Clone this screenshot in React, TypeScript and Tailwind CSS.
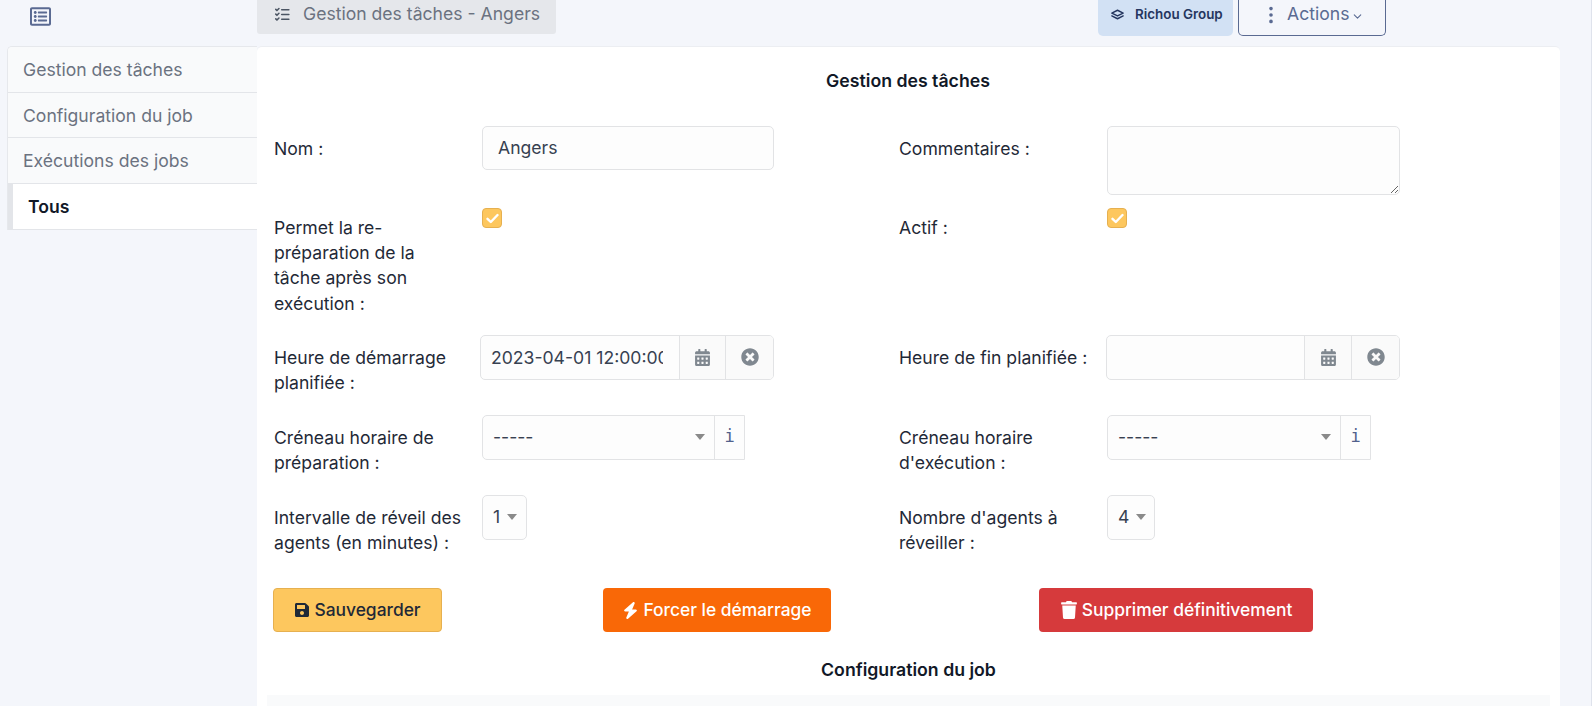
import React from "react";
import { FaCalendarAlt, FaRegListAlt, FaSave, FaTimesCircle, FaTrash } from "react-icons/fa";
import { FaBolt } from "react-icons/fa6";
import { TbChevronDown, TbDotsVertical, TbListCheck, TbStack } from "react-icons/tb";

const Caret = () => (
  <span className="inline-block h-0 w-0 border-x-[5px] border-t-[6px] border-x-transparent border-t-[#8a8a8a]" />
);

const Label = ({ children }: { children: React.ReactNode }) => (
  <div className="w-[190px] shrink-0 pt-[10px] pb-[10px] mr-[18px] text-[17.6px] leading-[25.2px] text-[#1f2937]">{children}</div>
);

const Check = () => (
  <div className="flex h-[20px] w-[20px] items-center justify-center rounded-[4px] border border-[#e6b050] bg-[#fdc75e]">
    <svg width="13" height="11" viewBox="0 0 13 11" fill="none">
      <path d="M1.5 5.8 L4.8 9 L11.5 2" stroke="white" strokeWidth="2.4" strokeLinecap="round" strokeLinejoin="round" />
    </svg>
  </div>
);

const DateField = ({ value, inputW }: { value: string; inputW: string }) => (
  <div className="flex h-[45px] w-[294px] overflow-hidden rounded-[5px] border border-[#e2e3e5] bg-[#fdfdfd]">
    <input
      readOnly
      value={value}
      className={`${inputW} h-full bg-transparent pl-[10px] pr-[16px] text-[17.6px] text-[#374151] outline-none`}
    />
    <div className="flex flex-1 items-center justify-center border-l border-[#e2e3e5] bg-[#fafafa]">
      <FaCalendarAlt className="text-[17px] text-[#808890]" />
    </div>
    <div className="flex w-[48px] items-center justify-center border-l border-[#e2e3e5] bg-[#fafafa]">
      <FaTimesCircle className="text-[18px] text-[#808890]" />
    </div>
  </div>
);

const SelectField = ({ w }: { w: string }) => (
  <div className={`${w} flex h-[45px] rounded-l-[5px] border border-[#e2e3e5] bg-[#fdfdfd]`}>
    <div className="flex flex-1 items-center justify-between pl-[10px] pr-[9px] text-[17.6px] text-[#374151]">
      <span>-----</span>
      <Caret />
    </div>
    <div className="flex w-[30px] items-center justify-center border-l border-[#e2e3e5] font-['DejaVu_Sans_Mono',monospace] text-[17px] text-[#52618c]">
      i
    </div>
  </div>
);

const SmallSelect = ({ value, w }: { value: string; w: string }) => (
  <div className={`${w} flex h-[45px] items-center gap-[7px] rounded-[5px] border border-[#e2e3e5] bg-[#fdfdfd] pl-[10px] text-[17.6px] text-[#374151]`}>
    <span>{value}</span>
    <Caret />
  </div>
);

const Row = ({ children }: { children: React.ReactNode }) => (
  <div className="grid grid-cols-[625px_1fr]">{children}</div>
);

const Cell = ({ label, children }: { label: React.ReactNode; children?: React.ReactNode }) => (
  <div className="flex items-start">
    <Label>{label}</Label>
    {children}
  </div>
);

const items = ["Gestion des tâches", "Configuration du job", "Exécutions des jobs"];

export default function App() {
  return (
    <div className="flex h-[706px] w-[1592px] overflow-hidden border-r border-[#dfe3ec] bg-[#f4f6fb] font-['Inter',sans-serif]">
      <aside className="w-[257px] shrink-0 pl-[7px]">
        <div className="flex h-[46px] items-center pl-[23px] pb-[14px]">
          <FaRegListAlt className="text-[21px] text-[#5a6a92]" />
        </div>
        <nav className="overflow-hidden rounded-tl-[5px] border-t border-l border-[#e6e8ec] text-[17.6px]">
          {items.map((t) => (
            <div key={t} className="flex h-[45.5px] items-center border-b border-[#e3e5e9] bg-[#f9fafb] pl-[15px] pt-[2px] text-[#6b7280]">
              {t}
            </div>
          ))}
          <div className="flex h-[46px] items-center border-b border-l-[5px] border-[#e3e5e9] bg-white pl-[15px] pt-[3px] font-semibold text-[#111827]">
            Tous
          </div>
        </nav>
      </aside>

      <main className="flex w-[1303px] shrink-0 flex-col">
        <header className="flex h-[46px] shrink-0 items-start">
          <div className="flex h-[34px] w-[299px] items-center gap-[11px] rounded-b-[3px] bg-[#e5e7eb] pb-[6px] pl-[16px] text-[17.6px] text-[#6b7280]">
            <TbListCheck className="text-[19px] text-[#4b5563]" />
            <span>Gestion des tâches - Angers</span>
          </div>
          <div className="ml-[542px] flex h-[36px] w-[135px] items-center gap-[9px] rounded-b-[5px] bg-[#d2e1f4] pb-[8px] pl-[11px] text-[13.4px] font-semibold text-[#25365f]">
            <TbStack className="text-[17px]" />
            <span>Richou Group</span>
          </div>
          <div className="ml-[5px] flex h-[36px] w-[148px] items-center rounded-b-[5px] border border-t-0 border-[#5a6a92] pb-[6px] pl-[21px] text-[17.6px] text-[#5a6a92]">
            <TbDotsVertical className="text-[22px]" />
            <span className="ml-[5px]">Actions</span>
            <TbChevronDown className="ml-[2px] mt-[3px] text-[13px]" />
          </div>
        </header>

        <section className="flex-1 rounded-t-[5px] border-t border-[#eceef2] bg-white pl-[17px] pr-[10px]">
          <h2 className="pt-[22px] pb-[33px] text-center text-[17.7px] leading-[24px] font-semibold text-[#111827] -ml-[8px]">Gestion des tâches</h2>

          <Row>
            <Cell label="Nom :">
              <div className="flex h-[44px] w-[292px] items-center rounded-[5px] border border-[#e2e3e5] bg-[#fdfdfd] pl-[15px] text-[17.6px] text-[#374151]">
                Angers
              </div>
            </Cell>
            <div className="mb-[10px] flex items-start">
              <Label>Commentaires :</Label>
              <textarea readOnly className="h-[69px] w-[293px] rounded-[5px] border border-[#e2e3e5] bg-[#fdfdfd]" />
            </div>
          </Row>

          <Row>
            <Cell label="Permet la re-préparation de la tâche après son exécution :">
              <div className="pt-[3px]"><Check /></div>
            </Cell>
            <Cell label="Actif :">
              <div className="pt-[3px]"><Check /></div>
            </Cell>
          </Row>

          <div className="mt-[9px] mb-[9.5px]">
            <Row>
              <div className="flex items-start">
                <div className="w-[190px] shrink-0 pt-[10px] pb-[10px] mr-[16px] text-[17.6px] leading-[25.2px] text-[#1f2937]">Heure de démarrage planifiée :</div>
                <DateField value="2023-04-01 12:00:00" inputW="w-[198px]" />
              </div>
              <div className="flex items-start">
                <div className="w-[190px] shrink-0 pt-[10px] pb-[10px] mr-[17px] text-[17.6px] leading-[25.2px] text-[#1f2937] whitespace-nowrap">Heure de fin planifiée :</div>
                <DateField value="" inputW="w-[197px]" />
              </div>
            </Row>
          </div>

          <div className="mb-[9.5px]">
            <Row>
              <Cell label="Créneau horaire de préparation :"><SelectField w="w-[263px]" /></Cell>
              <Cell label="Créneau horaire d'exécution :"><SelectField w="w-[264px]" /></Cell>
            </Row>
          </div>

          <Row>
            <Cell label="Intervalle de réveil des agents (en minutes) :"><SmallSelect value="1" w="w-[45px]" /></Cell>
            <Cell label="Nombre d'agents à réveiller :"><SmallSelect value="4" w="w-[48px]" /></Cell>
          </Row>

          <div className="-ml-[1px] mt-[23px] flex text-[17.4px]">
            <button className="flex h-[44px] w-[169px] items-center justify-center gap-[4px] rounded-[4px] border border-[#e6b050] bg-[#fdc75e] font-medium text-[#1f2937]">
              <FaSave className="text-[16px]" /> Sauvegarder
            </button>
            <button className="ml-[161px] flex h-[44px] w-[228px] items-center justify-center gap-[4px] rounded-[4px] bg-[#f96807] font-medium text-white">
              <FaBolt className="text-[17px]" /> Forcer le démarrage
            </button>
            <button className="ml-[208px] flex h-[44px] w-[274px] items-center justify-center gap-[4px] rounded-[4px] bg-[#d63a3c] font-medium text-white">
              <FaTrash className="text-[18px]" /> Supprimer définitivement
            </button>
          </div>

          <h2 className="pt-[26px] pb-[13px] -ml-[7px] text-center text-[17.7px] leading-[24px] font-semibold text-[#111827]">Configuration du job</h2>
          <div className="-ml-[7px] h-[20px] bg-[#f9fafb]" />
        </section>
      </main>
    </div>
  );
}
